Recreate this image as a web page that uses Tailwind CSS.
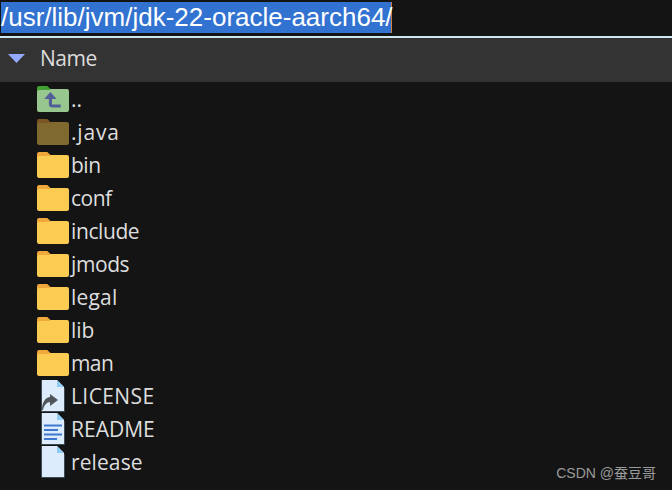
<!DOCTYPE html>
<html lang="en">
<head>
  <meta charset="UTF-8" />
  <title>jdk-22-oracle-aarch64</title>
  <script src="https://cdn.jsdelivr.net/npm/@tailwindcss/browser@4"></script>
</head>
<body class="relative w-[672px] h-[490px] overflow-hidden bg-[#141414] font-['Open_Sans',sans-serif] text-[#dedede]">
  <svg class="hidden">
    <symbol id="folder" viewBox="1 1 31 26" preserveAspectRatio="none">
      <path d="M1 6V3a2 2 0 0 1 2-2h8l4 4v3H1z" fill="#f0a83c"/>
      <path d="M1 7a2 2 0 0 1 2-2h10l1-1h16a2 2 0 0 1 2 2v19a2 2 0 0 1-2 2H3a2 2 0 0 1-2-2V7z" fill="#fccb52"/>
    </symbol>
    <symbol id="doc" viewBox="0 0 24 32">
      <path d="M1 0h15l7 7v24H1z" fill="#dcecfc"/>
      <path d="M16 0l7 7h-7z" fill="#90cdf4"/>
      <path d="M.5 0v31.500h23V8" fill="none" stroke="#3c4a58" stroke-width="1"/>
    </symbol>
  </svg>

  <div class="h-9 pt-0.5 pl-px bg-[#141414]">
    <div class="w-[391px] h-[31px] bg-[#3272d0] border-r border-[#d08040] text-white font-['Liberation_Sans',sans-serif] text-[26px] leading-[30px] whitespace-nowrap">/usr/lib/jvm/jdk-22-oracle-aarch64/</div>
  </div>
  <div class="h-0.5 bg-[#cfe8f0]"></div>

  <div class="h-11 flex items-center bg-[#333333]">
    <svg class="ml-2 mb-[3px] w-[17px] h-[9px]" viewBox="0 0 17 9"><path d="M0 0h17l-8.500 9z" fill="#93aaff"/></svg>
    <span class="ml-[15px] mb-[3px] text-[21px] tracking-[-0.5px] text-[#dcdcdc]">Name</span>
  </div>

  <ul class="text-[21px]">
    <li class="h-[33px] flex items-center pl-[37px]">
      <svg class="w-8 h-[26px]" viewBox="1 1 31 26" preserveAspectRatio="none">
        <path d="M1 6V3a2 2 0 0 1 2-2h8l4 4v3H1z" fill="#42a033"/>
        <path d="M1 7a2 2 0 0 1 2-2h10l1-1h16a2 2 0 0 1 2 2v19a2 2 0 0 1-2 2H3a2 2 0 0 1-2-2V7z" fill="#97c78f"/>
        <path d="M14 13v6a2 2 0 0 0 2 2h8" fill="none" stroke="#525e96" stroke-width="3"/>
        <path d="M14 7l6 7H8z" fill="#525e96"/>
      </svg>
      <span class="ml-0.5 mt-0.5">..</span>
    </li>
    <li class="h-[33px] flex items-center pl-[37px]">
      <svg class="w-8 h-[26px]" viewBox="1 1 31 26" preserveAspectRatio="none">
        <path d="M1 6V3a2 2 0 0 1 2-2h8l4 4v3H1z" fill="#7a5424"/>
        <path d="M1 7a2 2 0 0 1 2-2h10l1-1h16a2 2 0 0 1 2 2v19a2 2 0 0 1-2 2H3a2 2 0 0 1-2-2V7z" fill="#80692e"/>
      </svg>
      <span class="ml-0.5 mt-0.5 tracking-[0.8px]">.java</span>
    </li>
    <li class="h-[33px] flex items-center pl-[37px]"><svg class="w-8 h-[26px]"><use href="#folder"/></svg><span class="ml-0.5 mt-0.5 tracking-[-0.5px]">bin</span></li>
    <li class="h-[33px] flex items-center pl-[37px]"><svg class="w-8 h-[26px]"><use href="#folder"/></svg><span class="ml-0.5 mt-0.5 tracking-[-0.5px]">conf</span></li>
    <li class="h-[33px] flex items-center pl-[37px]"><svg class="w-8 h-[26px]"><use href="#folder"/></svg><span class="ml-0.5 mt-0.5 tracking-[-0.4px]">include</span></li>
    <li class="h-[33px] flex items-center pl-[37px]"><svg class="w-8 h-[26px]"><use href="#folder"/></svg><span class="ml-0.5 mt-0.5 tracking-[-0.4px]">jmods</span></li>
    <li class="h-[33px] flex items-center pl-[37px]"><svg class="w-8 h-[26px]"><use href="#folder"/></svg><span class="ml-0.5 mt-0.5 tracking-[0.2px]">legal</span></li>
    <li class="h-[33px] flex items-center pl-[37px]"><svg class="w-8 h-[26px]"><use href="#folder"/></svg><span class="ml-0.5 mt-0.5">lib</span></li>
    <li class="h-[33px] flex items-center pl-[37px]"><svg class="w-8 h-[26px]"><use href="#folder"/></svg><span class="ml-0.5 mt-0.5 tracking-[-0.6px]">man</span></li>
    <li class="h-[33px] flex items-center pl-[41px]">
      <svg class="w-6 h-8" viewBox="0 0 24 32">
        <use href="#doc"/>
        <path d="M1 30C1 24 3 18 9 17V14L17 20L9 26V22C6 22 3 25 2 30z" fill="#50555a"/>
      </svg>
      <span class="ml-1.5 mt-0.5 tracking-[0.4px]">LICENSE</span>
    </li>
    <li class="h-[33px] flex items-center pl-[41px]">
      <svg class="w-6 h-8" viewBox="0 0 24 32">
        <use href="#doc"/>
        <path d="M3 12.500h18M3 17h14M3 21.500h18M3 26h13" stroke="#3c78d0" stroke-width="2"/>
      </svg>
      <span class="ml-1.5 mt-0.5">README</span>
    </li>
    <li class="h-[33px] flex items-center pl-[41px]"><svg class="w-6 h-8"><use href="#doc"/></svg><span class="ml-1.5 mt-0.5 tracking-[0.1px]">release</span></li>
  </ul>

  <div class="absolute right-[16px] top-[464px] text-[14px] leading-[18px] text-[#9a9a9a] font-['Liberation_Sans','Noto_Sans_CJK_SC',sans-serif]">CSDN @蚕豆哥</div>
</body>
</html>
